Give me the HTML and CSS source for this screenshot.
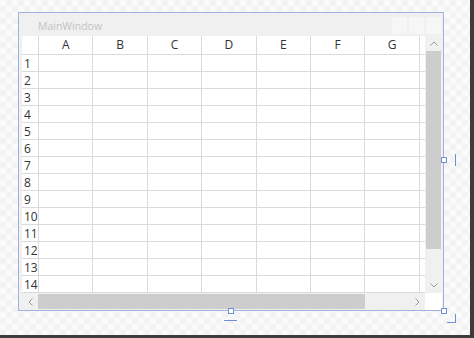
FILE: index.html
```html
<!DOCTYPE html>
<html>
<head>
<meta charset="utf-8">
<link rel="stylesheet" href="styles.css">
</head>
<body>
<div class="screen">
  <div class="canvas">
    <div class="window">
      <div class="titlebar">
        <span class="title">MainWindow</span>
        <div class="tbtns"><span></span><span></span><span></span></div>
      </div>
      <div class="table">
        <div class="grid">
          <div class="hrow">
            <div class="corner"></div>
            <div class="ch">A</div><div class="ch">B</div><div class="ch">C</div><div class="ch">D</div><div class="ch">E</div><div class="ch">F</div><div class="ch">G</div><div class="ch part"></div>
          </div>
          <div class="row"><div class="rh">1</div><div class="c"></div><div class="c"></div><div class="c"></div><div class="c"></div><div class="c"></div><div class="c"></div><div class="c"></div><div class="c part"></div></div>
          <div class="row"><div class="rh">2</div><div class="c"></div><div class="c"></div><div class="c"></div><div class="c"></div><div class="c"></div><div class="c"></div><div class="c"></div><div class="c part"></div></div>
          <div class="row"><div class="rh">3</div><div class="c"></div><div class="c"></div><div class="c"></div><div class="c"></div><div class="c"></div><div class="c"></div><div class="c"></div><div class="c part"></div></div>
          <div class="row"><div class="rh">4</div><div class="c"></div><div class="c"></div><div class="c"></div><div class="c"></div><div class="c"></div><div class="c"></div><div class="c"></div><div class="c part"></div></div>
          <div class="row"><div class="rh">5</div><div class="c"></div><div class="c"></div><div class="c"></div><div class="c"></div><div class="c"></div><div class="c"></div><div class="c"></div><div class="c part"></div></div>
          <div class="row"><div class="rh">6</div><div class="c"></div><div class="c"></div><div class="c"></div><div class="c"></div><div class="c"></div><div class="c"></div><div class="c"></div><div class="c part"></div></div>
          <div class="row"><div class="rh">7</div><div class="c"></div><div class="c"></div><div class="c"></div><div class="c"></div><div class="c"></div><div class="c"></div><div class="c"></div><div class="c part"></div></div>
          <div class="row"><div class="rh">8</div><div class="c"></div><div class="c"></div><div class="c"></div><div class="c"></div><div class="c"></div><div class="c"></div><div class="c"></div><div class="c part"></div></div>
          <div class="row"><div class="rh">9</div><div class="c"></div><div class="c"></div><div class="c"></div><div class="c"></div><div class="c"></div><div class="c"></div><div class="c"></div><div class="c part"></div></div>
          <div class="row"><div class="rh">10</div><div class="c"></div><div class="c"></div><div class="c"></div><div class="c"></div><div class="c"></div><div class="c"></div><div class="c"></div><div class="c part"></div></div>
          <div class="row"><div class="rh">11</div><div class="c"></div><div class="c"></div><div class="c"></div><div class="c"></div><div class="c"></div><div class="c"></div><div class="c"></div><div class="c part"></div></div>
          <div class="row"><div class="rh">12</div><div class="c"></div><div class="c"></div><div class="c"></div><div class="c"></div><div class="c"></div><div class="c"></div><div class="c"></div><div class="c part"></div></div>
          <div class="row"><div class="rh">13</div><div class="c"></div><div class="c"></div><div class="c"></div><div class="c"></div><div class="c"></div><div class="c"></div><div class="c"></div><div class="c part"></div></div>
          <div class="row"><div class="rh">14</div><div class="c"></div><div class="c"></div><div class="c"></div><div class="c"></div><div class="c"></div><div class="c"></div><div class="c"></div><div class="c part"></div></div>
        </div>
        <div class="vscroll">
          <div class="arrow"><svg width="8" height="5" viewBox="0 0 8 5"><path d="M0.5 4.5 L4 1 L7.5 4.5" fill="none" stroke="#9a9a9a" stroke-width="1"/></svg></div>
          <div class="vthumb"></div>
          <div class="vtrack"></div>
          <div class="arrow"><svg width="8" height="5" viewBox="0 0 8 5"><path d="M0.5 0.5 L4 4 L7.5 0.5" fill="none" stroke="#9a9a9a" stroke-width="1"/></svg></div>
        </div>
        <div class="hscroll">
          <div class="harrow"><svg width="5" height="8" viewBox="0 0 5 8"><path d="M4.5 0.5 L1 4 L4.5 7.5" fill="none" stroke="#9a9a9a" stroke-width="1"/></svg></div>
          <div class="hthumb"></div>
          <div class="htrack"></div>
          <div class="harrow"><svg width="5" height="8" viewBox="0 0 5 8"><path d="M0.5 0.5 L4 4 L0.5 7.5" fill="none" stroke="#9a9a9a" stroke-width="1"/></svg></div>
        </div>
        <div class="sizer"></div>
      </div>
    </div>
    <span class="handle h-right"></span>
    <span class="handle h-bottom"></span>
    <span class="handle h-corner"></span>
    <span class="mark m-right"></span>
    <span class="mark m-bottom"></span>
    <span class="mark m-corner"></span>
  </div>
</div>
</body>
</html>
```

FILE: styles.css
```css
html, body {
  margin: 0;
  padding: 0;
}
body {
  width: 474px;
  height: 338px;
  overflow: hidden;
  font-family: "Open Sans", "Noto Sans", sans-serif;
  background: #fff;
}
.screen {
  width: 470px;
  height: 335px;
  border-right: 4px solid #3c3c3c;
  border-bottom: 3px solid #3c3c3c;
  background-color: #f8f8f8;
  background-image: repeating-conic-gradient(#f3f3f3 0 25%, #fafafa 0 50%);
  background-size: 12px 12px;
}
.canvas {
  position: relative;
  padding: 12px 0 0 18px;
}
.window {
  width: 424px;
  height: 297px;
  border: 1px solid #9fb2e2;
  background: #f0f0f0;
  display: flex;
  flex-direction: column;
}
.titlebar {
  height: 23px;
  display: flex;
  align-items: center;
  justify-content: space-between;
  padding: 0 2px 0 19px;
}
.title {
  font-size: 10.5px;
  color: #c3c3c3;
  margin-top: 2px;
}
.tbtns {
  display: flex;
  gap: 2px;
  margin-top: 1px;
}
.tbtns span {
  width: 15px;
  height: 17px;
  background: #f6f6f6;
}
.table {
  margin-left: 3px;
  width: 420px;
  display: grid;
  grid-template-columns: 403px 17px;
  grid-template-rows: 257px 17px;
}
.grid {
  background: #fff;
  overflow: hidden;
  display: flex;
  flex-direction: column;
}
.hrow, .row {
  display: flex;
  flex: none;
}
.hrow {
  height: 19px;
  background: #fff;
}
.row {
  height: 17px;
}
.corner {
  width: 16px;
  flex: none;
  border-bottom: 1px solid #dadada;
  box-sizing: border-box;
}
.ch {
  width: 54.4px;
  flex: none;
  box-sizing: border-box;
  border-left: 1px solid #dadada;
  border-bottom: 1px solid #dadada;
  font-size: 12px;
  color: #333;
  text-align: center;
  line-height: 17px;
}
.rh {
  width: 16px;
  flex: none;
  box-sizing: border-box;
  border-bottom: 1px solid #dadada;
  font-size: 12px;
  color: #333;
  line-height: 17px;
  padding-left: 2px;
  background: #fff;
}
.c {
  width: 54.4px;
  flex: none;
  box-sizing: border-box;
  border-left: 1px solid #dadada;
  border-bottom: 1px solid #dadada;
}
.part {
  width: 20px;
}
.vscroll {
  background: #f0f0f0;
  display: flex;
  flex-direction: column;
  align-items: stretch;
}
.arrow {
  height: 15px;
  flex: none;
  display: flex;
  align-items: center;
  justify-content: center;
}
.vthumb {
  height: 198px;
  background: #cdcdcd;
  margin: 0 1px;
  flex: none;
}
.vtrack {
  flex: 1;
}
.hscroll {
  background: #f0f0f0;
  display: flex;
  align-items: stretch;
}
.harrow {
  width: 16px;
  flex: none;
  display: flex;
  align-items: center;
  justify-content: center;
}
.hthumb {
  width: 327px;
  flex: none;
  background: #cdcdcd;
  margin: 1px 0;
}
.htrack {
  flex: 1;
}
.sizer {
  background: #fff;
}
.handle {
  position: absolute;
  width: 4px;
  height: 4px;
  border: 1px solid #6f8fd6;
  background: #fff;
}
.h-right { left: 441px; top: 157px; }
.h-bottom { left: 228px; top: 308px; }
.h-corner { left: 441px; top: 308px; }
.mark {
  position: absolute;
  background: #6f8fd6;
}
.m-right { left: 455px; top: 154px; width: 1px; height: 12px; }
.m-bottom { left: 224px; top: 320px; width: 13px; height: 1px; }
.m-corner {
  left: 447px; top: 314px; width: 8px; height: 8px;
  background: none;
  border-right: 1px solid #6f8fd6;
  border-bottom: 1px solid #6f8fd6;
}
```
